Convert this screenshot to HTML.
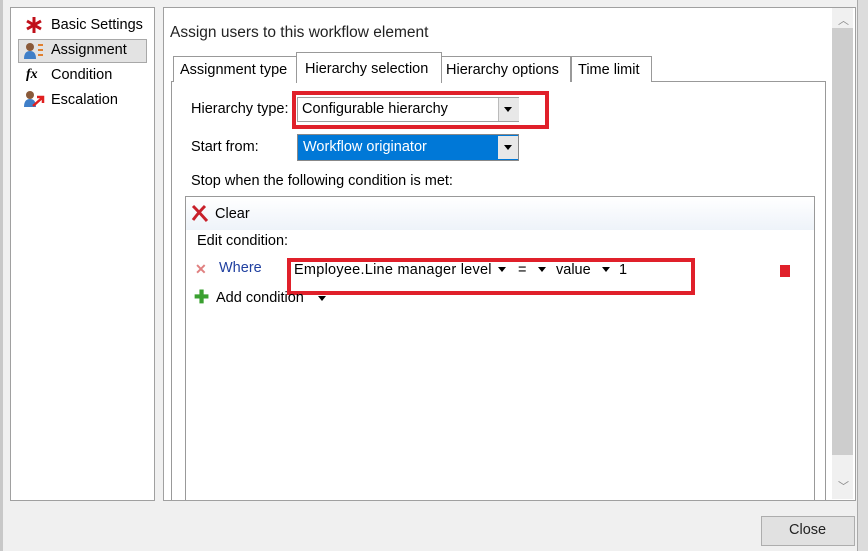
<!DOCTYPE html>
<html><head><style>
body{margin:0;width:868px;height:551px;background:#f0f0f0;position:relative;overflow:hidden;font-family:"Segoe UI","Liberation Sans",sans-serif;font-size:14.5px;color:#000}
.a{position:absolute}
.t{position:absolute;white-space:nowrap}
.ar{position:absolute;width:0;height:0;border-left:4px solid transparent;border-right:4px solid transparent;border-top:5px solid #000}
</style></head><body>
<div class="a" style="left:0;top:0;width:3px;height:551px;background:#c8c8c8"></div>
<div class="a" style="left:10px;top:7px;width:143px;height:492px;background:#fff;border:1px solid #a0a0a0"></div>
<div class="a" style="left:18px;top:39px;width:127px;height:22px;background:#e3e3e3;border:1px solid #a8a8a8"></div>
<svg class="a" style="left:25px;top:16px" width="18" height="18"><path d="M9 1V17M2 5L16 13M16 5L2 13" stroke="#c0101a" stroke-width="3"/></svg>
<div class="t" style="left:51px;top:17px">Basic Settings</div>
<svg class="a" style="left:23px;top:42px" width="22" height="18"><circle cx="7" cy="5" r="4" fill="#8a5a3a"/><path d="M1 17 Q1 9 7 9 Q13 9 13 17Z" fill="#3f7fc8"/><path d="M15 3h5M15 8h5M15 13h5" stroke="#e08030" stroke-width="2"/></svg>
<div class="t" style="left:51px;top:42px">Assignment</div>
<div class="t" style="left:26px;top:67px;font-family:'Liberation Serif',serif;font-style:italic;font-weight:bold;font-size:14px">fx</div>
<div class="t" style="left:51px;top:67px">Condition</div>
<svg class="a" style="left:23px;top:90px" width="22" height="18"><circle cx="7" cy="5" r="4" fill="#8a5a3a"/><path d="M1 17 Q1 9 7 9 Q13 9 13 17Z" fill="#3f7fc8"/><path d="M10 16 L19 8 M14 7h6v6" stroke="#e02020" stroke-width="2.5" fill="none"/></svg>
<div class="t" style="left:51px;top:92px">Escalation</div>

<div class="a" style="left:163px;top:7px;width:691px;height:492px;background:#fff;border:1px solid #a0a0a0"></div>
<div class="t" style="left:170px;top:24px;font-size:15.5px;color:#222">Assign users to this workflow element</div>
<div class="a" style="left:832px;top:8px;width:21px;height:491px;background:#f0f0f0"></div>
<div class="a" style="left:832px;top:28px;width:21px;height:427px;background:#cdcdcd"></div>
<div class="t" style="left:838px;top:12px;color:#888;font-size:11px">︿</div>
<div class="t" style="left:838px;top:478px;color:#888;font-size:11px">﹀</div>

<div class="a" style="left:171px;top:81px;width:653px;height:418px;border:1px solid #999;border-bottom:none;background:#fff"></div>
<div class="a" style="left:173px;top:56px;width:122px;height:25px;border:1px solid #999;border-bottom:none;background:#fff"></div>
<div class="t" style="left:180px;top:62px">Assignment type</div>
<div class="a" style="left:296px;top:52px;width:144px;height:30px;border:1px solid #999;border-bottom:none;background:#fff"></div>
<div class="t" style="left:305px;top:61px">Hierarchy selection</div>
<div class="a" style="left:441px;top:56px;width:128px;height:25px;border:1px solid #999;border-bottom:none;background:#fff"></div>
<div class="t" style="left:446px;top:62px">Hierarchy options</div>
<div class="a" style="left:571px;top:56px;width:79px;height:25px;border:1px solid #999;border-bottom:none;background:#fff"></div>
<div class="t" style="left:578px;top:62px">Time limit</div>

<div class="t" style="left:191px;top:101px">Hierarchy type:</div>
<div class="a" style="left:292px;top:91px;width:257px;height:38px;border:4px solid #e0202a;box-sizing:border-box"></div>
<div class="a" style="left:297px;top:97px;width:222px;height:25px;border:1px solid #a0a0a0;background:#fff;box-sizing:border-box"></div>
<div class="t" style="left:302px;top:101px">Configurable hierarchy</div>
<div class="a" style="left:498px;top:98px;width:20px;height:23px;background:#e8e8e8;border-left:1px solid #bbb"></div>
<div class="ar" style="left:504px;top:107px"></div>
<div class="t" style="left:191px;top:139px">Start from:</div>
<div class="a" style="left:297px;top:134px;width:222px;height:27px;background:#0078d7;border:1px solid #888;box-sizing:border-box"></div>
<div class="t" style="left:303px;top:139px;color:#fff">Workflow originator</div>
<div class="a" style="left:498px;top:136px;width:20px;height:23px;background:#e8e8e8"></div>
<div class="ar" style="left:504px;top:145px"></div>
<div class="t" style="left:191px;top:173px">Stop when the following condition is met:</div>

<div class="a" style="left:185px;top:196px;width:628px;height:303px;border:1px solid #999;border-bottom:none;background:#fff"></div>
<div class="a" style="left:186px;top:197px;width:628px;height:33px;background:linear-gradient(#fff,#eef3f9)"></div>
<svg class="a" style="left:190px;top:204px" width="20" height="18"><path d="M3 2 Q9 8 17 17 M15 2 Q9 8 3 16" stroke="#c8202a" stroke-width="3" fill="none"/></svg>
<div class="t" style="left:215px;top:206px">Clear</div>
<div class="t" style="left:197px;top:233px">Edit condition:</div>
<div class="t" style="left:195px;top:261px;color:#e08080;font-size:14px;font-weight:bold">✕</div>
<div class="t" style="left:219px;top:260px;color:#2040a0">Where</div>
<div class="a" style="left:287px;top:258px;width:408px;height:37px;border:4px solid #e0202a;box-sizing:border-box"></div>
<div class="t" style="left:294px;top:262px;letter-spacing:0.25px">Employee.Line manager level</div>
<div class="ar" style="left:498px;top:267px"></div>
<div class="t" style="left:518px;top:262px">=</div>
<div class="ar" style="left:538px;top:267px"></div>
<div class="t" style="left:556px;top:262px">value</div>
<div class="ar" style="left:602px;top:267px"></div>
<div class="t" style="left:619px;top:262px">1</div>
<div class="a" style="left:780px;top:265px;width:10px;height:12px;background:#e0202a"></div>
<div class="t" style="left:194px;top:287px;color:#3aa030;font-size:18px;font-weight:bold;line-height:20px">✚</div>
<div class="t" style="left:216px;top:290px">Add condition</div>
<div class="ar" style="left:318px;top:296px"></div>

<div class="a" style="left:761px;top:516px;width:92px;height:28px;background:#e1e1e1;border:1px solid #adadad"></div>
<div class="t" style="left:789px;top:522px;color:#222">Close</div>
<div class="a" style="left:857px;top:0;width:11px;height:551px;background:#dcdcdc;border-left:1px solid #aaa"></div>
</body></html>
